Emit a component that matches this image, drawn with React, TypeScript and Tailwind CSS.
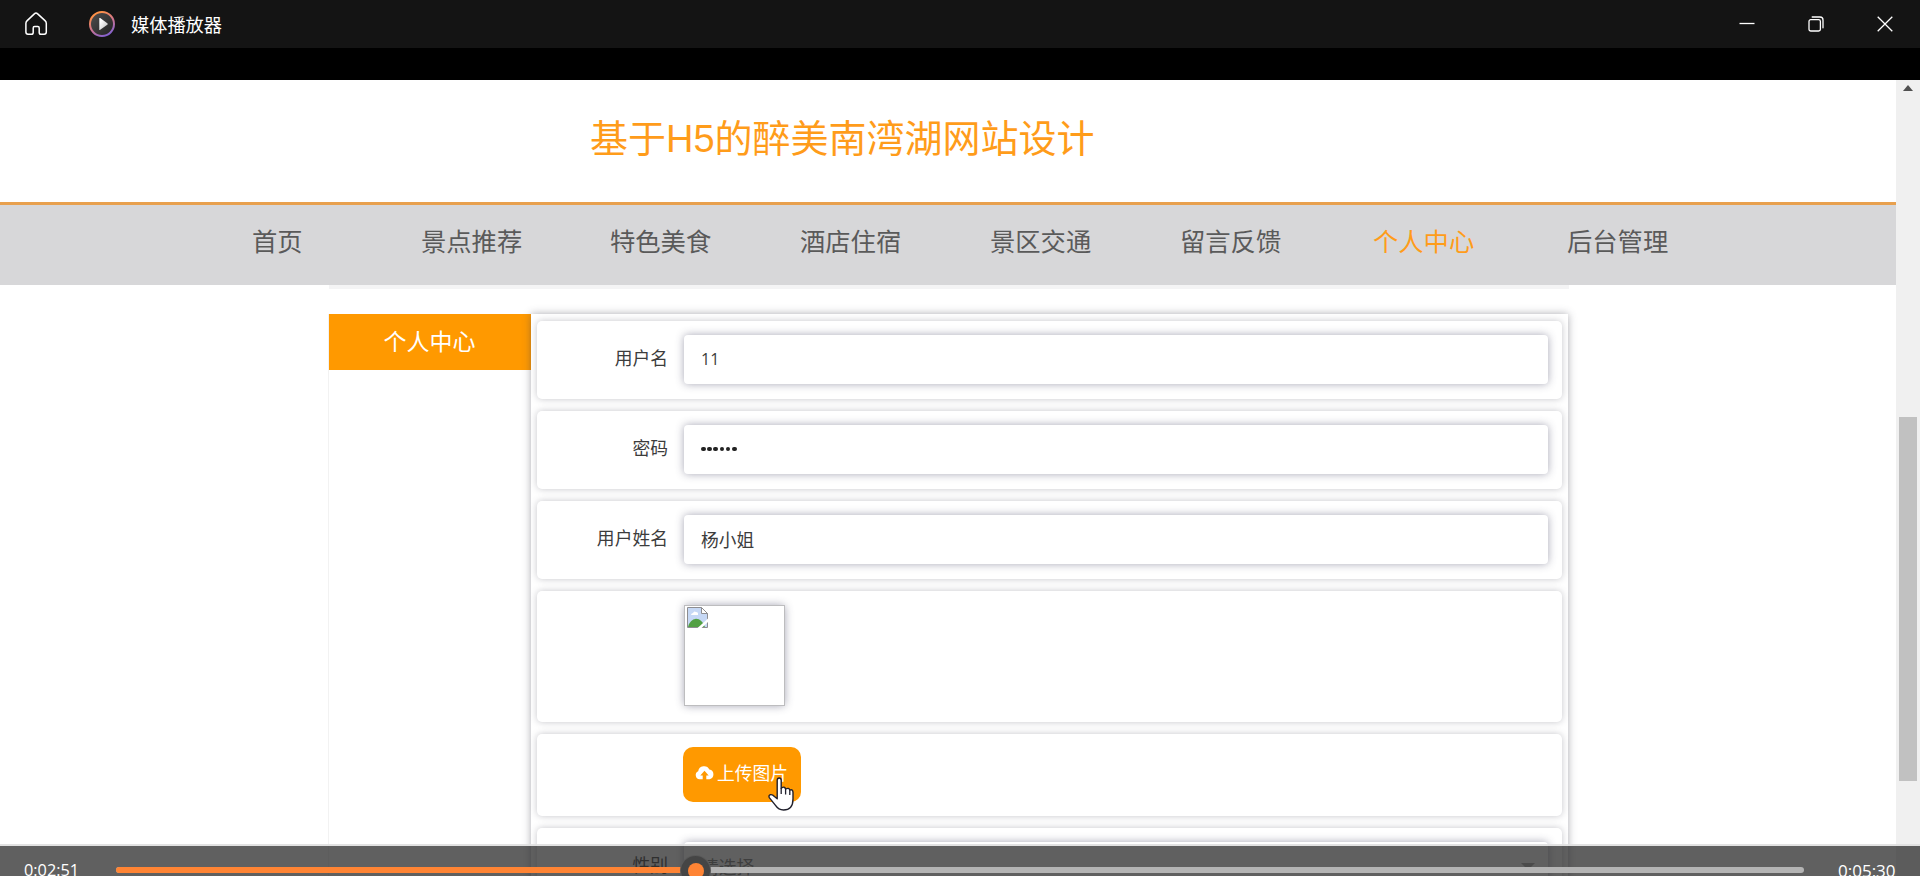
import React from "react";

const navItems = [
  { label: "首页", cell: "w-[169px]" },
  { label: "景点推荐", cell: "w-[189px]" },
  { label: "特色美食", cell: "w-[190px]" },
  { label: "酒店住宿", cell: "w-[190px]" },
  { label: "景区交通", cell: "w-[190px]" },
  { label: "留言反馈", cell: "w-[193px]" },
  { label: "个人中心", cell: "w-[194px]", active: true },
  { label: "后台管理", cell: "w-[110px]" },
];

const rowShadow = "shadow-[0_0_7px_rgba(80,80,95,0.33)]";
const fieldShadow = "shadow-[0_0_8px_rgba(60,60,90,0.45)]";

function TitleBar() {
  return (
    <header className="flex h-12 shrink-0 items-center bg-[#141414] text-white">
      <svg className="ml-6 h-6 w-6" viewBox="0 0 24 24" fill="none" stroke="#fff" strokeWidth="1.5" strokeLinejoin="round">
        <path d="M10.6 1.6Q12 .2 13.4 1.6L21 8.6Q22.3 9.8 22.3 11.3V20Q22.3 22.2 20.2 22.2H17Q15.2 22.2 15.2 20.4V16Q15.2 14.6 13.8 14.6H10.6Q9.2 14.6 9.2 16V20.4Q9.2 22.2 7.4 22.2H4Q1.9 22.2 1.9 20V11.3Q1.9 9.8 3.2 8.6Z" />
      </svg>
      <svg className="ml-10 h-7 w-7" viewBox="0 0 28 28">
        <defs>
          <linearGradient id="ring" x1="0.2" y1="0" x2="0.7" y2="1">
            <stop offset="0.1" stopColor="#ff9147" />
            <stop offset="0.5" stopColor="#d4778a" />
            <stop offset="1" stopColor="#8261d0" />
          </linearGradient>
          <linearGradient id="disc" x1="0" y1="0" x2="1" y2="1">
            <stop offset="0" stopColor="#505050" />
            <stop offset="1" stopColor="#202020" />
          </linearGradient>
          <linearGradient id="tri" x1="0" y1="0" x2="1" y2="1">
            <stop offset="0.2" stopColor="#fff" />
            <stop offset="1" stopColor="#bbb" />
          </linearGradient>
        </defs>
        <circle cx="14" cy="14" r="12" fill="url(#disc)" stroke="url(#ring)" strokeWidth="2" />
        <path d="M11.3 8.6V19.4Q11.3 20.4 12.2 19.8L19.3 14.8Q20.3 14 19.3 13.2L12.2 8.1Q11.3 7.6 11.3 8.6Z" fill="url(#tri)" />
      </svg>
      <span className="ml-[15px] text-[18.2px] leading-6">媒体播放器</span>
      <div className="ml-auto flex items-center gap-[53px] pr-[27px]">
        <svg className="h-4 w-4" viewBox="0 0 16 16" fill="none" stroke="#fff" strokeWidth="1.3">
          <path d="M.5 7.5H15.5" />
        </svg>
        <svg className="h-4 w-4" viewBox="0 0 16 16" fill="none" stroke="#fff" strokeWidth="1.3">
          <rect x="1" y="3.6" width="11.4" height="11.4" rx="1.8" />
          <path d="M4.2 1H12Q15 1 15 4V11.8" strokeLinecap="round" />
        </svg>
        <svg className="h-4 w-4" viewBox="0 0 16 16" fill="none" stroke="#fff" strokeWidth="1.3">
          <path d="M.7 .7L15.3 15.3M15.3 .7L.7 15.3" />
        </svg>
      </div>
    </header>
  );
}

function Row({ label, height, children }: { label?: string; height: string; children: React.ReactNode }) {
  return (
    <div className={`flex shrink-0 rounded-[5px] bg-white ${height} ${rowShadow}`}>
      <div className="w-[131px] shrink-0 pt-[24px] text-right text-[17.8px] leading-6 text-[#3c3c3c]">{label}</div>
      {children}
    </div>
  );
}

function Field({ value }: { value: React.ReactNode }) {
  return (
    <div className={`ml-4 mt-[14px] flex h-[49px] w-[864px] shrink-0 items-center rounded-[4px] bg-white pl-[17px] pb-px text-[17.7px] text-[#3c3c3c] ${fieldShadow}`}>
      {value}
    </div>
  );
}

function BrokenImage() {
  return (
    <div className={`ml-[16px] mt-[14px] h-[101px] w-[101px] rounded-[4px] ${fieldShadow}`}>
      <div className="h-full w-full border border-[#bdbdbf] bg-white p-px pl-[2px]">
        <svg className="h-[21px] w-[21px]" viewBox="0 0 21 21">
          <path d="M0.5 0.5H14.5L20.5 6.5V20.5H0.5Z" fill="#c6d8f5" />
          <path d="M4 8Q4 6.5 6 6Q7 3.5 9 5Q11.5 5 11 8Z" fill="#fff" />
          <path d="M1 20Q3 12.5 9 11.8Q15 12 18 20Z" fill="#52a043" />
          <path d="M0.5 20.5V0.5H14.5L20.5 6.5V20.5Z" fill="none" stroke="#8d8d90" />
          <path d="M14.5 0.5V6.5H20.5Z" fill="#fff" stroke="#8d8d90" />
          <path d="M10 21.5L21.5 11V14.5L14 21.5Z" fill="#fff" />
        </svg>
      </div>
    </div>
  );
}

function UploadButton() {
  return (
    <div className="relative ml-[15px] mt-[13px] flex h-[55px] w-[118px] items-center rounded-[10px] bg-[#ff9900] pb-[5px] pl-[12px] text-[17.8px] text-white">
      <svg className="mr-[3px] h-[15px] w-[19px] shrink-0" viewBox="0 0 19 15" fill="#fff">
        <path d="M4.5 14.2A4.2 4.2 0 0 1 3.2 6.2A5.9 5.9 0 0 1 14.4 4.6A4.9 4.9 0 0 1 14.6 14.2H11.3V10.4H13.7L9.5 5.8L5.3 10.4H7.7V14.2Z" />
      </svg>
      <span className="whitespace-nowrap">上传图片</span>
      <svg className="absolute left-[85px] top-[30px] h-[34px] w-[26px]" viewBox="0 0 26 34">
        <path
          d="M9.2 20V3.3Q9.2 1 11.2 1Q13.2 1 13.2 3.3V11.2Q16.8 8.8 17.6 12Q21.1 10.2 21.8 13.2Q25 11.8 25 15.5V22Q25 33 15.5 33Q10.5 33 7.5 28.4L1.3 20.6Q.3 18.5 2.3 17.7Q4.5 17.2 6.4 19.5L9.2 21.8Z"
          fill="#fff" stroke="#20202c" strokeWidth="1.4" strokeLinejoin="round"
        />
        <path d="M13.2 11V17M17.6 12V17.5M21.8 13.2V18" stroke="#20202c" strokeWidth="1.3" fill="none" />
      </svg>
    </div>
  );
}

function PlayerBar() {
  return (
    <div className="absolute inset-x-0 bottom-0 flex h-8 items-start border-t-2 border-[#dfdfdf]/90 bg-[#2b2b2b]/75 bg-clip-padding font-['Open_Sans'] text-[16px] text-white">
      <span className="mt-[16px] w-[92px] pl-6 text-[16.3px] leading-none">0:02:51</span>
      <div className="relative ml-6 mt-[21px] h-[6px] w-[1688px] rounded-full bg-[#b4b4b4]">
        <div className="h-full w-[580px] rounded-full bg-[#ff8434]" />
        <div className="absolute left-[565px] top-[-11px] flex h-[29px] w-[29px] items-center justify-center rounded-full bg-[#454545] ring-1 ring-[#5a5a5a]">
          <div className="h-4 w-4 rounded-full bg-[#ff8434]" />
        </div>
      </div>
      <span className="ml-[34px] mt-[16px] text-[17px] leading-none">0:05:30</span>
    </div>
  );
}

export default function App() {
  return (
    <div className="relative flex h-[876px] w-[1920px] flex-col overflow-hidden bg-white font-['Noto_Sans_CJK_SC',sans-serif]">
      <TitleBar />
      <div className="h-8 shrink-0 bg-black" />
      <div className="flex min-h-0 flex-1">
        <main className="flex w-[1896px] flex-col overflow-hidden bg-white">
          <h1 className="h-[122px] shrink-0 pl-[590px] pt-[30px] font-['Liberation_Sans','Noto_Sans_CJK_SC',sans-serif] text-[38px] leading-[58px] text-[#ff9c1a]">
            基于H5的醉美南湾湖网站设计
          </h1>
          <nav className="flex h-[83px] shrink-0 border-t-3 border-[#e8a04e] bg-[#d7d7d9] pl-[252px] pt-[16px] text-[25.3px] leading-[38px] text-[#5a5a5a]">
            {navItems.map((item) => (
              <a key={item.label} className={`${item.cell} shrink-0 whitespace-nowrap ${item.active ? "text-[#ff9c1a]" : ""}`}>
                {item.label}
              </a>
            ))}
          </nav>
          <div className="ml-[329px] h-1 w-[1240px] shrink-0 bg-[#f4f4f5]" />
          <div className="ml-[328px] mt-[25px] flex min-h-0 flex-1">
            <aside className="w-[203px] shrink-0 border-l border-[#f2f2f2]">
              <div className="h-[56px] bg-[#ff9900] pr-px text-center text-[23px] leading-[53px] text-white">个人中心</div>
            </aside>
            <section className="flex h-[700px] w-[1037px] shrink-0 flex-col gap-3 bg-white pl-[6px] pr-[6px] pt-[7px] shadow-[0_0_8px_rgba(70,70,85,0.45)]">
              <Row label="用户名" height="h-[78px]">
                <Field value={<span className="font-['Open_Sans'] text-[16px]">11</span>} />
              </Row>
              <Row label="密码" height="h-[78px]">
                <Field
                  value={
                    <span className="flex gap-[1.6px]">
                      {[0, 1, 2, 3, 4, 5].map((n) => (
                        <i key={n} className="h-[4.6px] w-[4.6px] rounded-full bg-[#222]" />
                      ))}
                    </span>
                  }
                />
              </Row>
              <Row label="用户姓名" height="h-[78px]">
                <Field value="杨小姐" />
              </Row>
              <Row height="h-[131px]">
                <BrokenImage />
              </Row>
              <Row height="h-[82px]">
                <UploadButton />
              </Row>
              <Row label="性别" height="h-[78px]">
                <Field
                  value={
                    <>
                      <span className="text-[#777]">请选择</span>
                      <svg className="ml-auto mr-[13px] h-[7px] w-[14px]" viewBox="0 0 14 7" fill="#aaa">
                        <path d="M0 0H14L7 7Z" />
                      </svg>
                    </>
                  }
                />
              </Row>
            </section>
          </div>
        </main>
        <div className="flex w-6 flex-col items-center bg-[#f0f0f0]">
          <svg className="mt-[5px] h-[6px] w-[10px]" viewBox="0 0 10 6" fill="#505050">
            <path d="M0 6L5 0L10 6Z" />
          </svg>
          <div className="mt-[326px] h-[364px] w-[18px] bg-[#c1c1c1]" />
        </div>
      </div>
      <PlayerBar />
    </div>
  );
}
